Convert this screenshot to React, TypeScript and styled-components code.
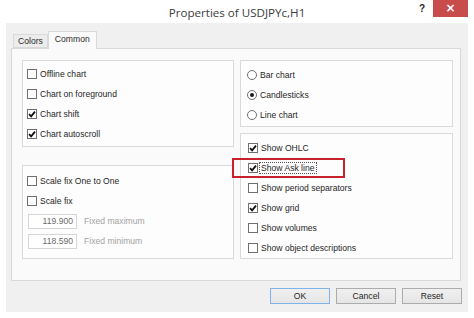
import React, { FC } from 'react';
import styled, { createGlobalStyle } from 'styled-components';

const GlobalStyle = createGlobalStyle`
    html, body {
        margin: 0;
        padding: 0;
        background: #ffffff;
    }
    body {
        font-family: "Liberation Sans", Arial, sans-serif;
        font-size: 8.6px;
        color: #1f1f1f;
    }
`;

interface Option {
    label: string;
    checked?: boolean;
    focused?: boolean;
}

const generalOptions: Option[] = [
    { label: 'Offline chart' },
    { label: 'Chart on foreground' },
    { label: 'Chart shift', checked: true },
    { label: 'Chart autoscroll', checked: true },
];

const chartTypes: Option[] = [
    { label: 'Bar chart' },
    { label: 'Candlesticks', checked: true },
    { label: 'Line chart' },
];

const showOptions: Option[] = [
    { label: 'Show OHLC', checked: true },
    { label: 'Show Ask line', checked: true, focused: true },
    { label: 'Show period separators' },
    { label: 'Show grid', checked: true },
    { label: 'Show volumes' },
    { label: 'Show object descriptions' },
];

const CheckMark: FC = () => (
    <svg width="8" height="8" viewBox="0 0 8 8">
        <path d="M1 4.2 L3.1 6.3 L7 1.6" fill="none" stroke="#111" strokeWidth="1.8" />
    </svg>
);

const CheckRow: FC<{ option: Option }> = ({ option }) => (
    <Row>
        <Box>{option.checked && <CheckMark />}</Box>
        <Label $focused={option.focused}>{option.label}</Label>
        {option.focused && <Highlight />}
    </Row>
);

const RadioRow: FC<{ option: Option }> = ({ option }) => (
    <Row>
        <Radio $checked={option.checked} />
        <Label>{option.label}</Label>
    </Row>
);

const FieldRow: FC<{ value: string; label: string }> = ({ value, label }) => (
    <Row>
        <NumberField>{value}</NumberField>
        <Label $muted>{label}</Label>
    </Row>
);

export default function App() {
    return (
        <Window>
            <GlobalStyle />
            <TitleBar>
                <span />
                <Title>Properties of USDJPYc,H1</Title>
                <Caption>
                    <HelpMark>?</HelpMark>
                    <CloseButton>×</CloseButton>
                </Caption>
            </TitleBar>
            <Client>
                <TabStrip>
                    <Tab>Colors</Tab>
                    <Tab $active>Common</Tab>
                </TabStrip>
                <TabPanel>
                    <Column $gap={18}>
                        <Group $height={87} $top={3}>
                            {generalOptions.map(o => <CheckRow key={o.label} option={o} />)}
                        </Group>
                        <Group $top={5} $grow>
                            <CheckRow option={{ label: 'Scale fix One to One' }} />
                            <CheckRow option={{ label: 'Scale fix' }} />
                            <FieldRow value="119.900" label="Fixed maximum" />
                            <FieldRow value="118.590" label="Fixed minimum" />
                        </Group>
                    </Column>
                    <Column $gap={6}>
                        <Group $height={67} $top={4} $inset={6}>
                            {chartTypes.map(o => <RadioRow key={o.label} option={o} />)}
                        </Group>
                        <Group $top={4} $inset={7} $grow>
                            {showOptions.map(o => <CheckRow key={o.label} option={o} />)}
                        </Group>
                    </Column>
                </TabPanel>
                <ButtonBar>
                    <Button $default>OK</Button>
                    <Button>Cancel</Button>
                    <Button>Reset</Button>
                </ButtonBar>
            </Client>
        </Window>
    );
}

const Window = styled.div`
    width: 474px;
    height: 318px;
    background: #ffffff;
    display: flex;
    flex-direction: column;
    overflow: hidden;
`;

const TitleBar = styled.div`
    height: 23px;
    display: grid;
    grid-template-columns: 1fr auto 1fr;
    align-items: start;
`;

const Title = styled.div`
    font-family: "Open Sans", "Noto Sans", sans-serif;
    font-size: 11.6px;
    line-height: 26px;
    color: #3c3c3c;
    white-space: nowrap;
`;

const Caption = styled.div`
    justify-self: end;
    display: flex;
    align-items: flex-start;
    padding-right: 6px;
`;

const HelpMark = styled.div`
    font-family: "Liberation Sans", Arial, sans-serif;
    font-weight: bold;
    font-size: 10px;
    line-height: 18px;
    color: #2b2b2b;
    margin-right: 8px;
`;

const CloseButton = styled.div`
    width: 35px;
    height: 17px;
    background: #c94c4c;
    color: #ffffff;
    font-family: "DejaVu Sans", sans-serif;
    font-size: 12px;
    font-weight: bold;
    line-height: 16px;
    text-align: center;
`;

const Client = styled.div`
    flex: 1;
    margin: 0 6px 6px 6px;
    background: #f0f0f0;
    padding: 8px 7px 0 5px;
    display: flex;
    flex-direction: column;
`;

const TabStrip = styled.div`
    display: flex;
    align-items: flex-end;
    height: 17px;
    margin-left: 2px;
    position: relative;
    z-index: 1;
`;

const Tab = styled.div<{ $active?: boolean }>`
    height: ${p => (p.$active ? 18 : 14)}px;
    padding: 0 ${p => (p.$active ? 6 : 4)}px;
    box-sizing: border-box;
    border: 1px solid #d9d9d9;
    border-bottom: ${p => (p.$active ? 'none' : '1px solid #d9d9d9')};
    margin-bottom: ${p => (p.$active ? -1 : 0)}px;
    background: ${p => (p.$active ? '#fafafa' : '#ececec')};
    line-height: ${p => (p.$active ? 15 : 12)}px;
    color: #2a2a2a;
`;

const TabPanel = styled.div`
    height: 233px;
    box-sizing: border-box;
    border: 1px solid #d9d9d9;
    background: #fafafa;
    padding: 11px 7px 21px 10px;
    display: grid;
    grid-template-columns: 212px 213px;
    column-gap: 6px;
`;

const Column = styled.div<{ $gap: number }>`
    display: flex;
    flex-direction: column;
    gap: ${p => p.$gap}px;
`;

const Group = styled.div<{ $height?: number; $top: number; $inset?: number; $grow?: boolean }>`
    box-sizing: border-box;
    ${p => (p.$height ? `height: ${p.$height}px;` : '')}
    ${p => (p.$grow ? 'flex: 1;' : '')}
    border: 1px solid #dadada;
    background: #fdfdfd;
    padding: ${p => p.$top}px 6px 0 ${p => p.$inset ?? 4}px;
`;

const Row = styled.div`
    position: relative;
    height: 20px;
    display: flex;
    align-items: center;
    gap: 2px;
`;

const Box = styled.div`
    width: 10px;
    height: 10px;
    box-sizing: border-box;
    border: 1px solid #6f6f6f;
    background: #ffffff;
    display: flex;
    align-items: center;
    justify-content: center;
`;

const Radio = styled.div<{ $checked?: boolean }>`
    width: 10px;
    height: 10px;
    box-sizing: border-box;
    border: 1px solid #6f6f6f;
    border-radius: 50%;
    background: #ffffff;
    display: flex;
    align-items: center;
    justify-content: center;
    &::after {
        content: '';
        width: 4px;
        height: 4px;
        border-radius: 50%;
        background: ${p => (p.$checked ? '#1a1a1a' : 'transparent')};
    }
`;

const Label = styled.span<{ $muted?: boolean; $focused?: boolean }>`
    white-space: nowrap;
    color: ${p => (p.$muted ? '#a3a3a3' : '#1f1f1f')};
    margin-left: ${p => (p.$muted ? 4 : 0)}px;
    padding: 0 1px;
    outline: ${p => (p.$focused ? '1px dotted #555' : 'none')};
`;

const Highlight = styled.div`
    position: absolute;
    left: -16px;
    top: 0;
    width: 113px;
    height: 20px;
    box-sizing: border-box;
    border: 2px solid #c8232c;
    pointer-events: none;
`;

const NumberField = styled.div`
    width: 49px;
    height: 15px;
    box-sizing: border-box;
    border: 1px solid #d6d6d6;
    background: #ffffff;
    color: #6a6a6a;
    text-align: right;
    padding-right: 3px;
    line-height: 13px;
    margin-left: 1px;
`;

const ButtonBar = styled.div`
    display: flex;
    justify-content: flex-end;
    gap: 6px;
    margin-top: 7px;
    margin-right: -1px;
`;

const Button = styled.div<{ $default?: boolean }>`
    width: 60px;
    height: 16px;
    box-sizing: border-box;
    border: 1px solid ${p => (p.$default ? '#7eb4ea' : '#acacac')};
    background: linear-gradient(#f0f0f0, #e5e5e5);
    text-align: center;
    line-height: 14px;
    color: #1f1f1f;
`;
